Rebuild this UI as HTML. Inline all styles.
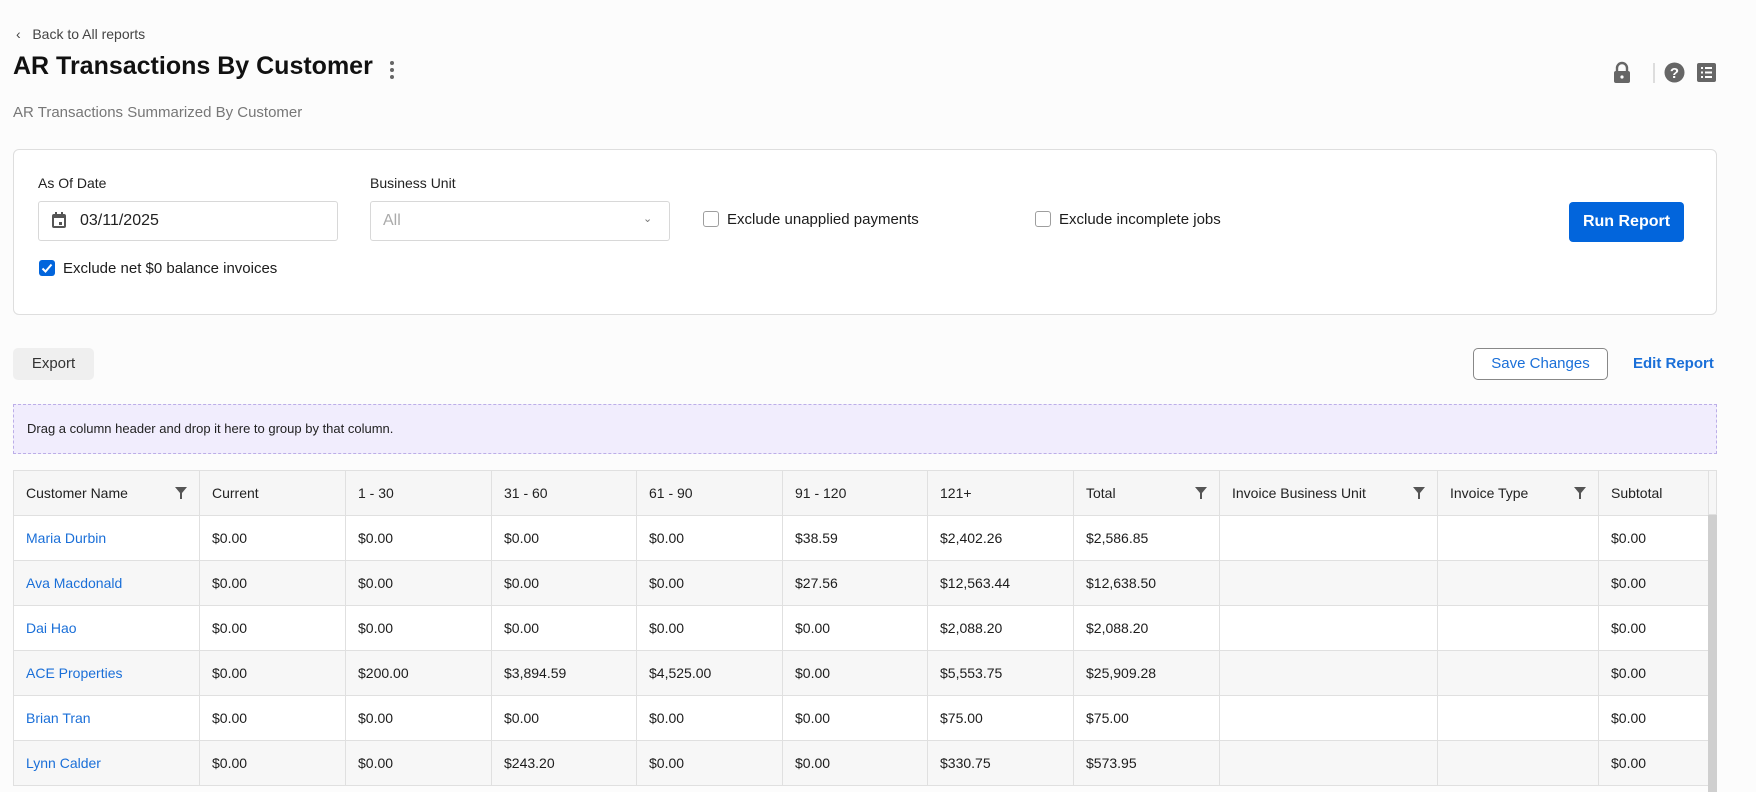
<!DOCTYPE html>
<html><head><meta charset="utf-8"><style>
*{box-sizing:border-box;margin:0;padding:0}
html,body{width:1756px;height:792px;overflow:hidden}
body{background:#fcfcfc;font-family:"Liberation Sans",sans-serif;color:#1c1c1c;position:relative}
.a{position:absolute;white-space:nowrap}
.cb{position:absolute;width:16px;height:16px;border:1px solid #9e9e9e;border-radius:3px;background:#fff}
table{position:absolute;left:13px;top:470px;border-collapse:collapse;font-size:14px;table-layout:fixed}
td,th{border:1px solid #e0e0e0;height:45px;padding:0 12px;text-align:left;font-weight:normal;white-space:nowrap;position:relative}
th{background:#f6f6f6;color:#222}
tr:nth-child(odd) td{background:#f7f7f7}
tr:nth-child(even) td{background:#fff}
td.n{color:#1a6fd8}
.f{position:absolute;right:12px;top:16px}
</style></head><body>
<div class="a" style="left:16px;top:26px;font-size:14px;color:#444">‹&nbsp;&nbsp;&nbsp;Back to All reports</div>
<div class="a" style="left:13px;top:52px;font-size:25px;font-weight:bold;color:#111">AR Transactions By Customer</div>
<svg class="a" style="left:387px;top:60px" width="10" height="20"><circle cx="5" cy="3" r="2" fill="#666"/><circle cx="5" cy="10" r="2" fill="#666"/><circle cx="5" cy="17" r="2" fill="#666"/></svg>
<div class="a" style="left:13px;top:104px;font-size:15px;color:#777">AR Transactions Summarized By Customer</div>
<svg class="a" style="left:1612px;top:61px" width="20" height="22"><path d="M5 10V7a5 5 0 0 1 10 0v3" stroke="#666" stroke-width="2.4" fill="none"/><rect x="2" y="10" width="16" height="12" rx="2" fill="#666"/><circle cx="10" cy="16" r="1.6" fill="#fff"/></svg>
<div class="a" style="left:1653px;top:63px;width:2px;height:20px;background:#ddd"></div>
<svg class="a" style="left:1664px;top:62px" width="21" height="21"><circle cx="10.5" cy="10.5" r="10" fill="#666"/><text x="10.5" y="16" font-size="15" font-weight="bold" text-anchor="middle" fill="#fff" font-family="Liberation Sans">?</text></svg>
<svg class="a" style="left:1697px;top:63px" width="19" height="19"><rect width="19" height="19" rx="2" fill="#666"/><g fill="#fff"><rect x="4" y="4" width="2" height="2"/><rect x="8" y="4" width="7" height="2"/><rect x="4" y="8.5" width="2" height="2"/><rect x="8" y="8.5" width="7" height="2"/><rect x="4" y="13" width="2" height="2"/><rect x="8" y="13" width="7" height="2"/></g></svg>

<div class="a" style="left:13px;top:149px;width:1704px;height:166px;border:1px solid #dedede;border-radius:6px;background:#fff"></div>
<div class="a" style="left:38px;top:175px;font-size:14px;color:#222">As Of Date</div>
<div class="a" style="left:38px;top:201px;width:300px;height:40px;border:1px solid #d8d8d8;border-radius:3px;background:#fff"></div>
<svg class="a" style="left:52px;top:212px" width="14" height="16"><rect x="1" y="3" width="12" height="12" rx="1" fill="none" stroke="#555" stroke-width="2"/><rect x="1" y="3" width="12" height="3" fill="#555"/><rect x="3" y="0" width="2" height="4" fill="#555"/><rect x="9" y="0" width="2" height="4" fill="#555"/><rect x="7" y="10" width="3" height="3" fill="#555"/></svg>
<div class="a" style="left:80px;top:212px;font-size:16px;color:#222">03/11/2025</div>
<div class="a" style="left:370px;top:175px;font-size:14px;color:#222">Business Unit</div>
<div class="a" style="left:370px;top:201px;width:300px;height:40px;border:1px solid #d8d8d8;border-radius:3px;background:#fff"></div>
<div class="a" style="left:383px;top:212px;font-size:16px;color:#aaa">All</div>
<div class="a" style="left:643px;top:212px;font-size:11px;color:#777">⌄</div>
<div class="cb" style="left:703px;top:211px"></div>
<div class="a" style="left:727px;top:211px;font-size:15px">Exclude unapplied payments</div>
<div class="cb" style="left:1035px;top:211px"></div>
<div class="a" style="left:1059px;top:211px;font-size:15px">Exclude incomplete jobs</div>
<div class="a" style="left:1569px;top:202px;width:115px;height:40px;background:#0265dc;border-radius:4px;color:#fff;font-size:16px;font-weight:bold;text-align:center;line-height:40px">Run Report</div>
<svg class="a" style="left:39px;top:260px" width="16" height="16"><rect width="16" height="16" rx="3" fill="#0265dc"/><path d="M3.5 8.5l3 3 6-7" stroke="#fff" stroke-width="2" fill="none"/></svg>
<div class="a" style="left:63px;top:260px;font-size:15px">Exclude net $0 balance invoices</div>

<div class="a" style="left:13px;top:348px;width:81px;height:32px;background:#efefef;border-radius:5px;font-size:15px;color:#333;text-align:center;line-height:32px">Export</div>
<div class="a" style="left:1473px;top:348px;width:135px;height:32px;border:1px solid #888;border-radius:5px;background:#fff;font-size:15px;color:#1a6fd8;text-align:center;line-height:30px">Save Changes</div>
<div class="a" style="left:1633px;top:355px;font-size:15px;font-weight:bold;color:#1a6fd8">Edit Report</div>

<div class="a" style="left:13px;top:404px;width:1704px;height:50px;background:#f1edfd;border:1px dashed #bcaee8"></div>
<div class="a" style="left:27px;top:421px;font-size:13px;color:#222">Drag a column header and drop it here to group by that column.</div>

<table>
<colgroup><col style="width:186px"><col style="width:146px"><col style="width:146px"><col style="width:145px"><col style="width:146px"><col style="width:145px"><col style="width:146px"><col style="width:146px"><col style="width:218px"><col style="width:161px"><col style="width:110px"></colgroup>
<tr><th>Customer Name<svg class="f" width="12" height="12"><path d="M0 0h12L7 6v6H5V6z" fill="#555"/></svg></th><th>Current</th><th>1 - 30</th><th>31 - 60</th><th>61 - 90</th><th>91 - 120</th><th>121+</th><th>Total<svg class="f" width="12" height="12"><path d="M0 0h12L7 6v6H5V6z" fill="#555"/></svg></th><th>Invoice Business Unit<svg class="f" width="12" height="12"><path d="M0 0h12L7 6v6H5V6z" fill="#555"/></svg></th><th>Invoice Type<svg class="f" width="12" height="12"><path d="M0 0h12L7 6v6H5V6z" fill="#555"/></svg></th><th>Subtotal</th></tr>
<tr><td class="n">Maria Durbin</td><td>$0.00</td><td>$0.00</td><td>$0.00</td><td>$0.00</td><td>$38.59</td><td>$2,402.26</td><td>$2,586.85</td><td></td><td></td><td>$0.00</td></tr>
<tr><td class="n">Ava Macdonald</td><td>$0.00</td><td>$0.00</td><td>$0.00</td><td>$0.00</td><td>$27.56</td><td>$12,563.44</td><td>$12,638.50</td><td></td><td></td><td>$0.00</td></tr>
<tr><td class="n">Dai Hao</td><td>$0.00</td><td>$0.00</td><td>$0.00</td><td>$0.00</td><td>$0.00</td><td>$2,088.20</td><td>$2,088.20</td><td></td><td></td><td>$0.00</td></tr>
<tr><td class="n">ACE Properties</td><td>$0.00</td><td>$200.00</td><td>$3,894.59</td><td>$4,525.00</td><td>$0.00</td><td>$5,553.75</td><td>$25,909.28</td><td></td><td></td><td>$0.00</td></tr>
<tr><td class="n">Brian Tran</td><td>$0.00</td><td>$0.00</td><td>$0.00</td><td>$0.00</td><td>$0.00</td><td>$75.00</td><td>$75.00</td><td></td><td></td><td>$0.00</td></tr>
<tr><td class="n">Lynn Calder</td><td>$0.00</td><td>$0.00</td><td>$243.20</td><td>$0.00</td><td>$0.00</td><td>$330.75</td><td>$573.95</td><td></td><td></td><td>$0.00</td></tr>
</table>
<div class="a" style="left:1708px;top:470px;width:9px;height:45px;background:#f6f6f6;border:1px solid #e0e0e0"></div>
<div class="a" style="left:1708px;top:515px;width:9px;height:277px;background:#cfcfcf"></div>
</body></html>
